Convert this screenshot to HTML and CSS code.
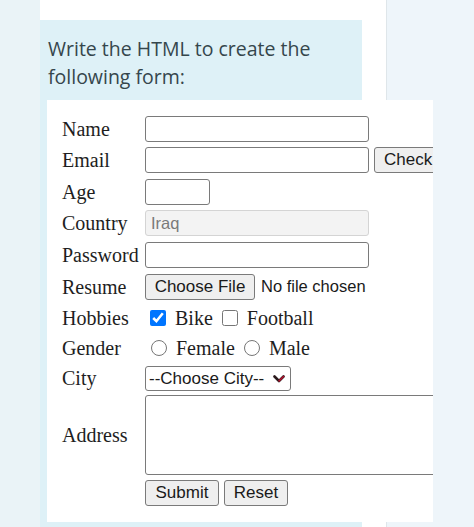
FILE: index.html
```html
<!DOCTYPE html>
<html>
<head>
<meta charset="utf-8">
<link rel="stylesheet" href="styles.css">
</head>
<body>
<div class="page">
  <div class="strip"></div>
  <main class="main">
    <section class="card">
      <p class="title">Write the HTML to create the following form:</p>
      <form class="form">
        <label class="lbl">Name</label>
        <div class="field"><input class="txt wide" type="text"></div>

        <label class="lbl">Email</label>
        <div class="field"><input class="txt wide" type="email"><button type="button" class="btn check">Check</button></div>

        <label class="lbl">Age</label>
        <div class="field"><input class="txt age" type="text"></div>

        <label class="lbl">Country</label>
        <div class="field"><input class="txt wide dis" type="text" value="Iraq" disabled></div>

        <label class="lbl">Password</label>
        <div class="field"><input class="txt wide" type="password"></div>

        <label class="lbl">Resume</label>
        <div class="field"><input class="file" type="file"></div>

        <label class="lbl">Hobbies</label>
        <div class="field opts">
          <input class="cb" type="checkbox" checked><span class="opt">Bike</span>
          <input class="cb" type="checkbox"><span class="opt">Football</span>
        </div>

        <label class="lbl">Gender</label>
        <div class="field opts">
          <input class="rd" type="radio" name="g"><span class="opt">Female</span>
          <input class="rd" type="radio" name="g"><span class="opt">Male</span>
        </div>

        <label class="lbl">City</label>
        <div class="field">
          <div class="selwrap">
            <select class="sel"><option>--Choose City--</option></select>
            <svg class="chev" width="12" height="8" viewBox="0 0 12 8"><path d="M1.5 1.5 L6 6 L10.5 1.5" fill="none" stroke="#2a1a1c" stroke-width="2.6" stroke-linecap="round" stroke-linejoin="round"/><path d="M6 6 L10.5 1.5" fill="none" stroke="#b3122e" stroke-width="1.6" stroke-linecap="round"/></svg>
          </div>
        </div>

        <label class="lbl addr">Address</label>
        <div class="field top"><textarea class="area"></textarea></div>

        <span></span>
        <div class="field top"><button type="submit" class="btn submit">Submit</button><button type="reset" class="btn reset">Reset</button></div>
      </form>
    </section>
  </main>
</div>
</body>
</html>
```

FILE: styles.css
```css
html, body {
  margin: 0;
  padding: 0;
}
body {
  background: #eef5fa;
  width: 474px;
  height: 527px;
  overflow: hidden;
}
.page {
  display: flex;
  height: 527px;
}
.strip {
  width: 40px;
  flex: none;
  background: #eaf3f7;
}
.main {
  width: 347px;
  flex: none;
  background: #ffffff;
  border-right: 1px solid #dfe6ea;
  padding-top: 20px;
  box-sizing: border-box;
}
.card {
  width: 322px;
  height: 507px;
  background: #def1f7;
  padding-top: 1px;
  box-sizing: border-box;
}
.title {
  margin: 14px 0 0 8px;
  font-family: "Open Sans", sans-serif;
  font-size: 19.5px;
  line-height: 28px;
  color: #35464c;
  width: 310px;
  height: 65px;
  letter-spacing: 0;
}
.form {
  margin: 0 0 0 7px;
  width: 386px;
  height: 422px;
  background: #ffffff;
  box-sizing: border-box;
  padding: 16px 0 0 15px;
  display: grid;
  grid-template-columns: 83px 1fr;
  grid-template-rows: 31px 32px 31px 32px 32px 31px 30px 30px 30px 85px 30px;
  overflow: hidden;
  font-family: "Liberation Serif", "Times New Roman", serif;
  font-size: 20px;
  color: #1e1e1e;
}
.lbl {
  line-height: 26px;
  height: 26px;
  white-space: nowrap;
}
.lbl.addr {
  height: 80px;
  line-height: 80px;
}
.field {
  display: flex;
  align-items: center;
  height: 26px;
  white-space: nowrap;
}
.field.top {
  align-items: flex-start;
  height: auto;
}
.txt {
  box-sizing: border-box;
  height: 26px;
  border: 1px solid #7a7a7a;
  border-radius: 3px;
  padding: 0 5px;
  margin: 0;
  font-family: "Liberation Sans", Arial, sans-serif;
  font-size: 16.5px;
  background: #fff;
}
.wide { width: 224px; }
.age { width: 65px; }
.dis {
  background: #f3f3f3;
  border-color: #d4d4d4;
  color: #7a7a7a;
}
.btn {
  box-sizing: border-box;
  height: 26px;
  margin: 0;
  padding: 0;
  border: 1px solid #7a7a7a;
  border-radius: 3px;
  background: #efefef;
  font-family: "Liberation Sans", Arial, sans-serif;
  font-size: 17px;
  color: #1a1a1a;
}
.check {
  width: 70px;
  margin-left: 5px;
  flex: none;
  text-align: left;
  padding-left: 9px;
}
.file {
  font-family: "Liberation Sans", Arial, sans-serif;
  font-size: 16.5px;
  color: #1a1a1a;
  margin: 0;
  height: 26px;
}
.file::file-selector-button {
  box-sizing: border-box;
  width: 110px;
  height: 26px;
  margin: 0 6px 0 0;
  padding: 0;
  border: 1px solid #7a7a7a;
  border-radius: 3px;
  background: #efefef;
  font-family: "Liberation Sans", Arial, sans-serif;
  font-size: 17px;
  color: #1a1a1a;
}
.cb, .rd {
  width: 16px;
  height: 16px;
  margin: 0;
  flex: none;
  accent-color: #0075ff;
}
.cb:first-child { margin-left: 5px; }
.rd:first-child { margin-left: 6px; }
.opt {
  margin: 0 9px 0 9px;
}
.selwrap {
  position: relative;
  display: flex;
}
.sel {
  appearance: none;
  -webkit-appearance: none;
  box-sizing: border-box;
  width: 146px;
  height: 25px;
  margin: 0;
  border: 1px solid #7a7a7a;
  border-radius: 3px;
  background: #fff;
  font-family: "Liberation Sans", Arial, sans-serif;
  font-size: 17px;
  color: #1a1a1a;
  padding: 0 0 0 3px;
}
.chev {
  position: absolute;
  left: 128px;
  top: 9px;
  pointer-events: none;
}
.area {
  box-sizing: border-box;
  width: 310px;
  height: 80px;
  margin: 0;
  border: 1px solid #7a7a7a;
  border-radius: 3px;
  resize: none;
  flex: none;
}
.submit { width: 74px; }
.reset { width: 64px; margin-left: 5px; }
```
